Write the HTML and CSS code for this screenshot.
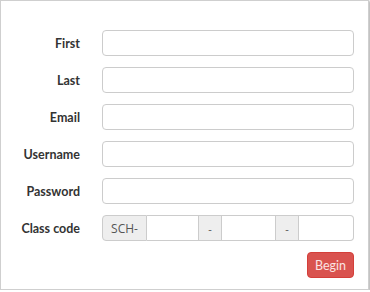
FILE: index.html
```html
<!DOCTYPE html>
<html lang="en">
<head>
    <meta charset="UTF-8">
    <title>Sign up</title>
    <link rel="stylesheet" href="styles.css">
</head>
<body>

    <div class="card">
        <div class="row">
            <label>First</label>
            <input type="text" class="input-field">
        </div>
        <div class="row">
            <label>Last</label>
            <input type="text" class="input-field">
        </div>
        <div class="row">
            <label>Email</label>
            <input type="text" class="input-field">
        </div>
        <div class="row">
            <label>Username</label>
            <input type="text" class="input-field">
        </div>
        <div class="row">
            <label>Password</label>
            <input type="password" class="input-field">
        </div>
        <div class="row">
            <label>Class code</label>
            <div class="input-group">
                <span class="addon addon-first">SCH-</span>
                <input type="text" class="code code-a">
                <span class="addon">-</span>
                <input type="text" class="code">
                <span class="addon">-</span>
                <input type="text" class="code code-last">
            </div>
        </div>
        <div class="actions">
            <button class="btn">Begin</button>
        </div>
    </div>

</body>
</html>
```

FILE: styles.css
```css
* {
    margin: 0;
    padding: 0;
    box-sizing: border-box;
}

body {
    background-color: white;
    font-family: 'Lato', 'Open Sans', sans-serif;
}

.card {
    width: 369px;
    height: 290px;
    border: 1px solid #cfcfcf;
    box-shadow: 1px 1px 2px rgba(0, 0, 0, 0.35);
    padding: 29px 14px 0 0;
    background: white;
}

.row {
    display: flex;
    align-items: center;
    height: 26px;
    margin-bottom: 11px;
}

label {
    width: 79px;
    margin-right: 22px;
    text-align: right;
    font-weight: 700;
    font-size: 12.5px;
    color: #333;
}

.input-field {
    flex: 1;
    height: 26px;
    border: 1px solid #ccc;
    border-radius: 4px;
    outline: none;
}

.input-group {
    flex: 1;
    display: flex;
    height: 26px;
}

.addon {
    display: flex;
    align-items: center;
    justify-content: center;
    width: 23px;
    background-color: #eee;
    border: 1px solid #ccc;
    border-left: none;
    color: #555;
    font-family: 'Open Sans', sans-serif;
    font-size: 11px;
}

.addon-first {
    width: 45px;
    border-left: 1px solid #ccc;
    border-radius: 4px 0 0 4px;
    font-size: 12px;
}

.code {
    width: 54px;
    height: 26px;
    border: 1px solid #ccc;
    border-left: none;
    outline: none;
}

.code-a {
    width: 52px;
}

.code-last {
    flex: 1;
    border-radius: 0 4px 4px 0;
}

.actions {
    display: flex;
    justify-content: flex-end;
    margin-top: 1px;
}

.btn {
    width: 47px;
    height: 26px;
    background-color: #d9534f;
    border: 1px solid #d43f3a;
    border-radius: 4px;
    color: #fbe4e3;
    font-family: 'Lato', sans-serif;
    font-size: 12.5px;
}
```
